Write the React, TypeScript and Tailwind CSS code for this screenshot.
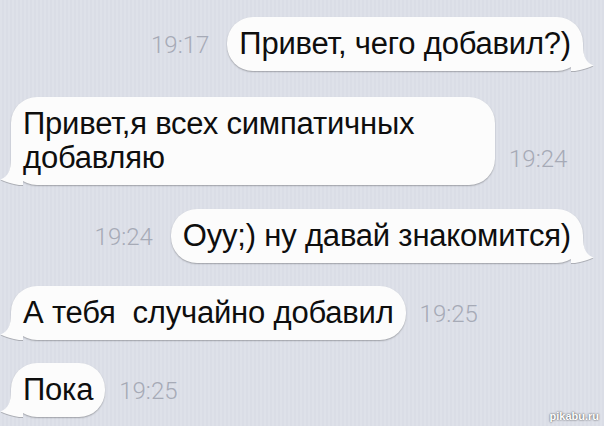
import React from 'react';

type Side = 'in' | 'out';

interface Message {
  side: Side;
  text: string;
  time: string;
}

const messages: Message[] = [
  { side: 'out', text: 'Привет, чего добавил?)', time: '19:17' },
  { side: 'in', text: 'Привет,я всех симпатичных добавляю', time: '19:24' },
  { side: 'out', text: 'Оуу;) ну давай знакомится)', time: '19:24' },
  { side: 'in', text: 'А тебя  случайно добавил', time: '19:25' },
  { side: 'in', text: 'Пока', time: '19:25' },
];

// хвостик пузыря в стиле iOS 7
const Tail = ({ side }: { side: Side }) => (
  <svg
    width="24"
    height="26"
    viewBox="0 0 24 26"
    className={
      side === 'out'
        ? 'absolute bottom-0 right-[-12px] drop-shadow-[0_1px_0.6px_rgba(0,0,0,0.22)]'
        : 'absolute bottom-0 left-[-12px] -scale-x-100 drop-shadow-[0_1px_0.6px_rgba(0,0,0,0.22)]'
    }
  >
    <path d="M0 0 H12 C12 11 15 18 22.5 20.5 C17 23 11 25 4 26 H0 Z" fill="#fcfcfc" />
  </svg>
);

const Bubble = ({ msg }: { msg: Message }) => (
  <div className="relative max-w-[484px] rounded-[26px] bg-[#fcfcfc] px-[12px] py-[10px] text-[31px] leading-[34px] tracking-[-0.2px] text-[#0e0e0e] whitespace-pre-wrap shadow-[0_1px_1.5px_rgba(0,0,0,0.28)]">
    <Tail side={msg.side} />
    <span className="relative">{msg.text}</span>
  </div>
);

const Time = ({ value, className = '' }: { value: string; className?: string }) => (
  <div
    className={`mb-[15px] shrink-0 text-[24px] font-light leading-[22px] text-[#a6aab6] ${className}`}
    style={{ fontFamily: 'Roboto, "Liberation Sans", sans-serif' }}
  >
    {value}
  </div>
);

export default function App() {
  const gaps = ['mt-[17px]', 'mt-[26px]', 'mt-[24px]', 'mt-[23px]', 'mt-[23px]'];

  return (
    <div
      className="relative h-[426px] w-[604px] overflow-hidden bg-[repeating-linear-gradient(90deg,#dee1e9_0px,#dee1e9_2px,#dadde6_2px,#dadde6_4px)]"
      style={{ fontFamily: '"Liberation Sans", Arial, sans-serif' }}
    >
      <div className="flex flex-col">
        {messages.map((m, i) =>
          m.side === 'out' ? (
            <div key={i} className={`flex items-end justify-end pr-[21px] ${gaps[i]}`}>
              <Time value={m.time} className="mr-[18px]" />
              <Bubble msg={m} />
            </div>
          ) : (
            <div key={i} className={`flex items-end justify-start pl-[11px] ${gaps[i]}`}>
              <Bubble msg={m} />
              <Time value={m.time} className="ml-[14px]" />
            </div>
          )
        )}
      </div>

      {/* водяной знак */}
      <div className="absolute bottom-[4px] right-[5px] text-[11px] font-bold leading-none text-white [text-shadow:0_0_2px_rgba(0,0,0,0.8)]">
        pikabu.ru
      </div>
    </div>
  );
}
